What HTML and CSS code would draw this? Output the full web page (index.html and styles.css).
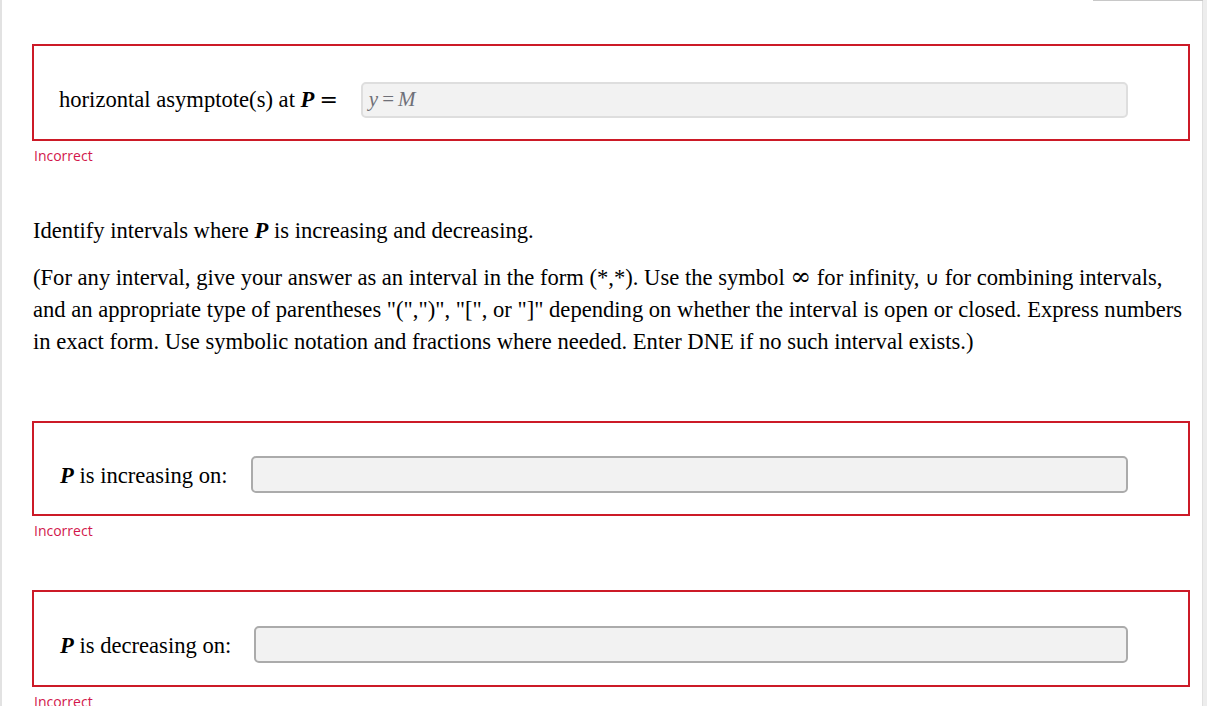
FILE: index.html
```html
<!DOCTYPE html>
<html>
<head>
<meta charset="utf-8">
<link rel="stylesheet" href="styles.css">
</head>
<body>
<div class="frame">
  <div class="topline"></div>
  <main class="content">
    <section class="answer-box first">
      <span class="label">horizontal asymptote(s) at <i class="var">P</i><span class="eq">=</span></span>
      <div class="field soft"><span class="ph"><i>y</i><span class="peq">=</span><i>M</i></span></div>
    </section>
    <div class="feedback">Incorrect</div>

    <p class="prompt lead">Identify intervals where <i class="var">P</i> is increasing and decreasing.</p>
    <p class="prompt">(For any interval, give your answer as an interval in the form (*,*). Use the symbol <span class="inf">∞</span> for infinity, <span class="cup">∪</span> for combining intervals, and an appropriate type of parentheses "(",")", "[", or "]" depending on whether the interval is open or closed. Express numbers in exact form. Use symbolic notation and fractions where needed. Enter DNE if no such interval exists.)</p>

    <section class="answer-box second">
      <span class="label"><i class="var">P</i> is increasing on:</span>
      <div class="field"></div>
    </section>
    <div class="feedback">Incorrect</div>

    <section class="answer-box third">
      <span class="label"><i class="var">P</i> is decreasing on:</span>
      <div class="field"></div>
    </section>
    <div class="feedback">Incorrect</div>
  </main>
  <div class="scrollbar"></div>
</div>
</body>
</html>
```
FILE: styles.css
```css
* { box-sizing: border-box; }
html, body { margin: 0; padding: 0; background: #fff; }
body {
  font-family: "Liberation Serif", "Times New Roman", serif;
  color: #000;
  overflow: hidden;
  height: 706px;
}
.frame {
  position: relative;
  height: 706px;
  border-left: 2px solid #e2e2e2;
  display: flex;
}
.topline {
  position: absolute;
  top: 0;
  left: 1091px;
  width: 110px;
  height: 1px;
  background: #c8c8c8;
}
.scrollbar {
  width: 5px;
  flex: none;
  margin-left: auto;
  background: #ededed;
  border-left: 1px solid #e0e0e0;
}
.content {
  flex: 1;
  padding: 44px 12px 0 30px;
}
.answer-box {
  border: 2px solid #cc1a27;
  display: flex;
  align-items: center;
  padding: 0 60px 0 25px;
  font-size: 22.6px;
}
.answer-box.first { height: 97px; padding-top: 14px; }
.answer-box.second { height: 95px; padding-top: 12px; padding-left: 26px; }
.answer-box.third { height: 97px; padding-top: 12px; padding-left: 26px; }
.label { white-space: nowrap; margin-right: 23px; position: relative; top: 1px; }
.answer-box.first .label { top: 0; }
.eq { margin-left: 5px; font-family: "DejaVu Serif", serif; font-size: 22px; line-height: 1; }
.var { font-weight: bold; font-style: italic; }
.field {
  flex: 1;
  height: 37px;
  background: #f2f2f2;
  border: 2px solid #ababab;
  border-radius: 5px;
}
.field.soft {
  height: 36px;
  border-color: #dedede;
  display: flex;
  align-items: center;
  padding-left: 6px;
}
.ph { color: #6f7078; font-size: 21px; }
.peq { margin: 0 4px; }
.feedback {
  font-family: "Open Sans", "Noto Sans", sans-serif;
  color: #d2174c;
  font-size: 14px;
  line-height: 18px;
  margin-top: 6px;
  padding-left: 2px;
}
.prompt {
  margin: 0;
  font-size: 22.6px;
  line-height: 32px;
  padding-left: 1px;
}
.prompt.lead { margin-top: 50px; margin-bottom: 15px; }
.prompt + .answer-box { margin-top: 63px; }
.feedback + .answer-box { margin-top: 50px; }
.inf { font-family: "DejaVu Serif", serif; font-size: 25px; line-height: 1; }
.cup { font-family: "DejaVu Sans", sans-serif; font-size: 19px; line-height: 1; }
```
